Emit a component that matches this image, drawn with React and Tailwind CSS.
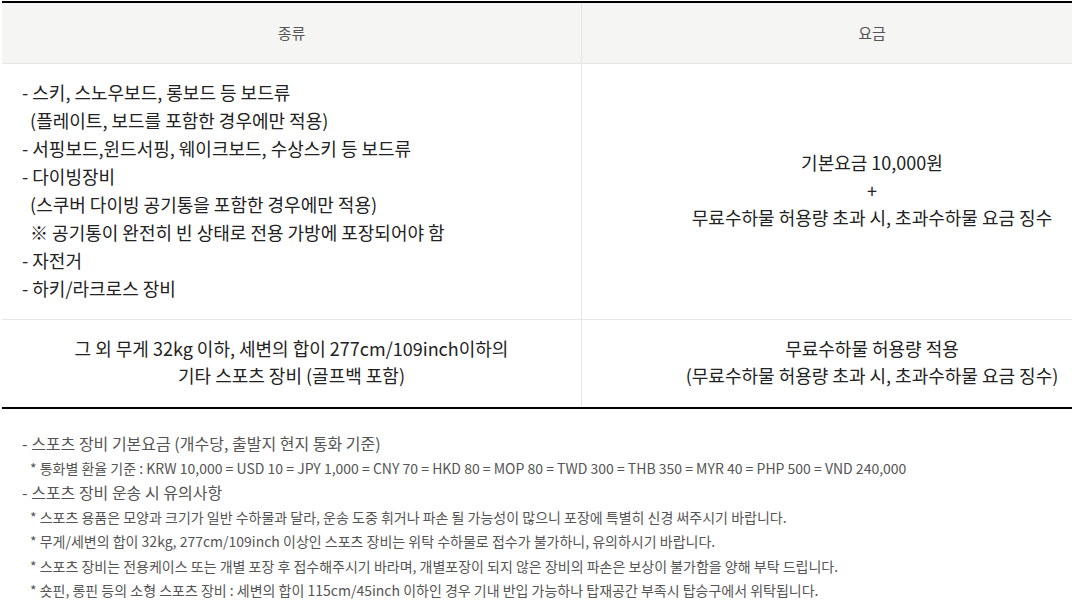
// Sports equipment fee table
const leftItems = [
  '- 스키, 스노우보드, 롱보드 등 보드류',
  '\u00a0\u00a0(플레이트, 보드를 포함한 경우에만 적용)',
  '- 서핑보드,윈드서핑, 웨이크보드, 수상스키 등 보드류',
  '- 다이빙장비',
  '\u00a0\u00a0(스쿠버 다이빙 공기통을 포함한 경우에만 적용)',
  '\u00a0\u00a0※ 공기통이 완전히 빈 상태로 전용 가방에 포장되어야 함',
  '- 자전거',
  '- 하키/라크로스 장비',
];

const notes = [
  { type: 'head', text: '- 스포츠 장비 기본요금 (개수당, 출발지 현지 통화 기준)' },
  { type: 'sub', text: '* 통화별 환율 기준 : KRW 10,000 = USD 10 = JPY 1,000 = CNY 70 = HKD 80 = MOP 80 = TWD 300 = THB 350 = MYR 40 = PHP 500 = VND 240,000' },
  { type: 'head', text: '- 스포츠 장비 운송 시 유의사항' },
  { type: 'sub', text: '* 스포츠 용품은 모양과 크기가 일반 수하물과 달라, 운송 도중 휘거나 파손 될 가능성이 많으니 포장에 특별히 신경 써주시기 바랍니다.' },
  { type: 'sub', text: '* 무게/세변의 합이 32kg, 277cm/109inch 이상인 스포츠 장비는 위탁 수하물로 접수가 불가하니, 유의하시기 바랍니다.' },
  { type: 'sub', text: '* 스포츠 장비는 전용케이스 또는 개별 포장 후 접수해주시기 바라며, 개별포장이 되지 않은 장비의 파손은 보상이 불가함을 양해 부탁 드립니다.' },
  { type: 'sub', text: '* 숏핀, 롱핀 등의 소형 스포츠 장비 : 세변의 합이 115cm/45inch 이하인 경우 기내 반입 가능하나 탑재공간 부족시 탑승구에서 위탁됩니다.' },
];

export default function App() {
  return (
    <div
      className="w-[1072px] h-[612px] overflow-hidden bg-white pl-[2px] pt-[1px] text-[#222]"
      style={{ fontFamily: '"Noto Sans CJK KR", "Noto Sans", sans-serif' }}
    >
      {/* table is wider than the viewport; the right column is clipped */}
      <div className="w-[1160px] border-t-2 border-b-2 border-black">
        <div className="grid grid-cols-[580px_580px] bg-[#f5f5f4] border-b border-[#e6e6e6] h-[61px] text-[15px] text-[#555]">
          <div className="flex items-center justify-center border-r border-[#e6e6e6]">종류</div>
          <div className="flex items-center justify-center">요금</div>
        </div>

        <div className="grid grid-cols-[580px_580px] border-b border-[#e6e6e6] text-[18px]">
          <div className="border-r border-[#e6e6e6] pl-[20px] pt-[14px] pb-[17px] leading-[28px]">
            {leftItems.map((t) => (
              <div key={t} className="whitespace-pre">{t}</div>
            ))}
          </div>
          <div className="flex flex-col items-center justify-center text-center leading-[27.5px] pb-[2px]">
            <div>기본요금 10,000원</div>
            <div>+</div>
            <div>무료수하물 허용량 초과 시, 초과수하물 요금 징수</div>
          </div>
        </div>

        <div className="grid grid-cols-[580px_580px] h-[87px] text-[18px] leading-[27px]">
          <div className="flex flex-col items-center justify-center text-center border-r border-[#e6e6e6] pb-[4px]">
            <div>그 외 무게 32kg 이하, 세변의 합이 277cm/109inch이하의</div>
            <div>기타 스포츠 장비 (골프백 포함)</div>
          </div>
          <div className="flex flex-col items-center justify-center text-center pb-[4px]">
            <div>무료수하물 허용량 적용</div>
            <div>(무료수하물 허용량 초과 시, 초과수하물 요금 징수)</div>
          </div>
        </div>
      </div>

      <div className="pl-[20px] pt-[22px] text-[#555]">
        {notes.map((n) =>
          n.type === 'head' ? (
            <div key={n.text} className="text-[16px] leading-[24.5px]">{n.text}</div>
          ) : (
            <div key={n.text} className="pl-[8px] text-[14px] leading-[24.5px]">{n.text}</div>
          )
        )}
      </div>
    </div>
  );
}
